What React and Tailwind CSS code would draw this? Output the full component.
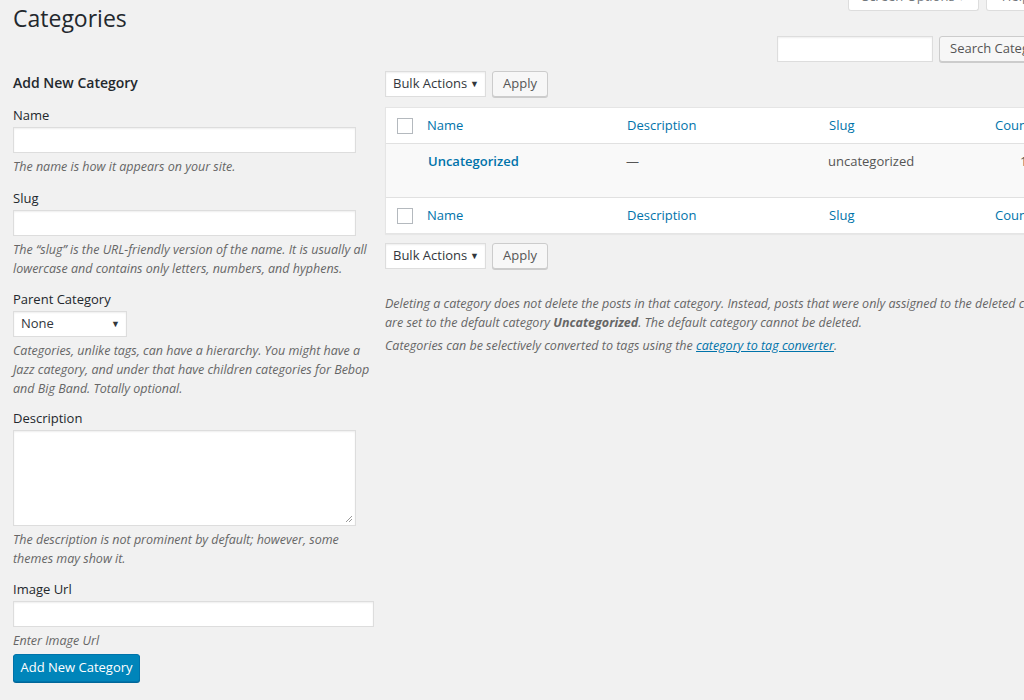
const font = { fontFamily: '"Open Sans", "Noto Sans", sans-serif' };

function Select({ label, className }) {
  return (
    <div className={`flex h-[26px] items-center justify-between border border-[#ddd] bg-white pl-[7px] pr-[6px] text-[13px] text-[#32373c] shadow-[inset_0_1px_2px_rgba(0,0,0,0.07)] ${className}`}>
      <span>{label}</span>
      <span className="text-[9px]">▼</span>
    </div>
  );
}

function Button({ children, className = '' }) {
  return (
    <div className={`flex h-[26px] items-center whitespace-nowrap rounded-[3px] border border-[#ccc] bg-[#f7f7f7] px-[10px] text-[13px] text-[#555] shadow-[0_1px_0_#ccc] ${className}`}>
      {children}
    </div>
  );
}

function BulkBar() {
  return (
    <div className="flex gap-[6px]">
      <Select label="Bulk Actions" className="w-[101px]" />
      <Button>Apply</Button>
    </div>
  );
}

function Field({ label, children, help, className = '' }) {
  return (
    <div className={className}>
      <div className="text-[13px] leading-[18px] text-[#23282d]">{label}</div>
      <div className="mt-[3px]">{children}</div>
      {help && <div className="mt-[4px] text-[12.5px] italic leading-[19px] text-[#666] whitespace-nowrap">{help}</div>}
    </div>
  );
}

const input = 'h-[26px] border border-[#ddd] bg-white shadow-[inset_0_1px_2px_rgba(0,0,0,0.07)]';

function HeadRow() {
  return (
    <div className="flex h-[35px] items-center bg-white text-[13px] text-[#0073aa]">
      <div className="ml-[11px] h-[16px] w-[16px] border border-[#b4b9be] bg-white" />
      <div className="ml-[14px] w-[200px]">Name</div>
      <div className="w-[202px]">Description</div>
      <div className="w-[166px]">Slug</div>
      <div>Count</div>
    </div>
  );
}

export default function App() {
  return (
    <div className="h-[700px] w-[1024px] overflow-hidden bg-[#f1f1f1] text-[#23282d]" style={font}>
      <div className="w-[1100px]">
        <div className="flex h-[36px] items-start justify-between">
          <h1 className="ml-[13px] mt-[4px] text-[23px] font-normal leading-[29px]">Categories</h1>
          <div className="mr-[44px] flex gap-[7px]">
            <div className="-mt-[16px] flex h-[27px] w-[131px] items-center justify-center rounded-b-[3px] border border-[#ddd] border-t-0 bg-white text-[13px] text-[#72777c]">Screen Options ▾</div>
            <div className="-mt-[16px] flex h-[27px] w-[70px] items-center justify-center rounded-b-[3px] border border-[#ddd] border-t-0 bg-white text-[13px] text-[#72777c]">Help ▾</div>
          </div>
        </div>
        <div className="flex h-[26px] gap-[6px] pl-[777px]">
          <div className={`w-[156px] ${input}`} />
          <Button>Search Categories</Button>
        </div>
        <div className="flex">
          <div className="ml-[13px] w-[361px] pt-[11px]">
            <h2 className="text-[14px] font-semibold leading-[20px]">Add New Category</h2>
            <Field className="mt-[13px]" label="Name" help="The name is how it appears on your site.">
              <div className={`w-[343px] ${input}`} />
            </Field>
            <Field className="mt-[13px]" label="Slug" help={<>The “slug” is the URL-friendly version of the name. It is usually all<br />lowercase and contains only letters, numbers, and hyphens.</>}>
              <div className={`w-[343px] ${input}`} />
            </Field>
            <Field className="mt-[12px]" label="Parent Category" help={<>Categories, unlike tags, can have a hierarchy. You might have a<br />Jazz category, and under that have children categories for Bebop<br />and Big Band. Totally optional.</>}>
              <Select label="None" className="w-[114px]" />
            </Field>
            <Field className="mt-[11px]" label="Description" help={<>The description is not prominent by default; however, some<br />themes may show it.</>}>
              <div className="relative h-[96px] w-[343px] border border-[#ddd] bg-white shadow-[inset_0_1px_2px_rgba(0,0,0,0.07)]">
                <svg className="absolute bottom-[2px] right-[2px]" width="8" height="8" viewBox="0 0 8 8"><path d="M7 1 1 7M7 4 4 7" stroke="#999" strokeWidth="1" /></svg>
              </div>
            </Field>
            <Field className="mt-[12px]" label="Image Url" help="Enter Image Url">
              <div className={`w-[361px] ${input}`} />
            </Field>
            <div className="mt-[4px] flex h-[28px] w-[127px] items-center justify-center rounded-[3px] border border-[#0073aa] bg-[#0085ba] text-[13px] text-white shadow-[0_1px_0_#006799]">Add New Category</div>
          </div>
          <div className="ml-[11px] flex-1 pt-[9px]">
            <BulkBar />
            <div className="mt-[10px] border border-[#e5e5e5] shadow-[0_1px_1px_rgba(0,0,0,0.04)]">
              <HeadRow />
              <div className="flex h-[55px] items-start border-y border-[#e1e1e1] bg-[#f9f9f9] pt-[8px] text-[13px]">
                <div className="ml-[42px] w-[198px] font-semibold text-[#0073aa]">Uncategorized</div>
                <div className="w-[202px] text-[#555]">—</div>
                <div className="w-[166px] text-[#555]">uncategorized</div>
                <div className="pl-[26px] text-[#555]">1</div>
              </div>
              <HeadRow />
            </div>
            <div className="mt-[9px]"><BulkBar /></div>
            <div className="mt-[25px] text-[12.5px] italic leading-[19px] text-[#666] whitespace-nowrap">
              <p>Deleting a category does not delete the posts in that category. Instead, posts that were only assigned to the deleted category<br />are set to the default category <b>Uncategorized</b>. The default category cannot be deleted.</p>
              <p className="mt-[4px]">Categories can be selectively converted to tags using the <span className="text-[#0073aa] underline">category to tag converter</span>.</p>
            </div>
          </div>
        </div>
      </div>
    </div>
  );
}
